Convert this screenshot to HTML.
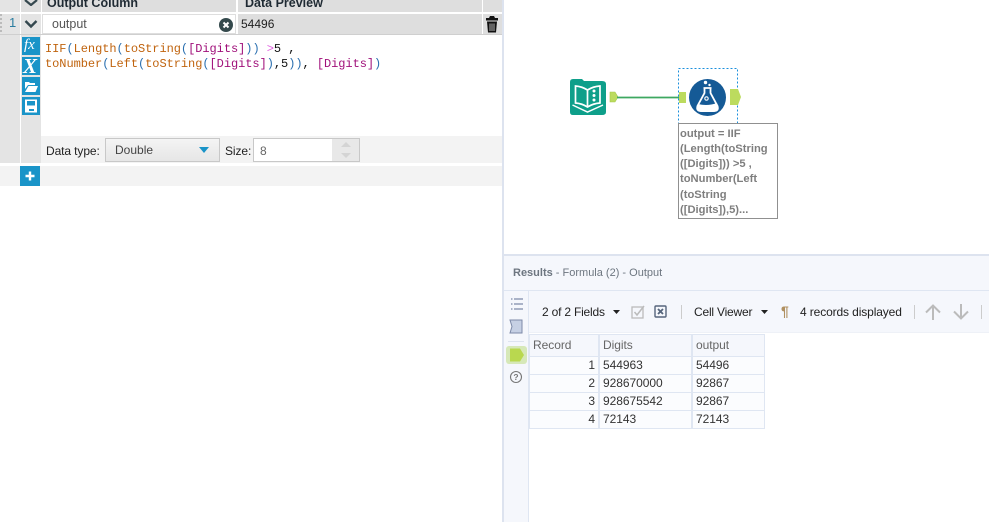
<!DOCTYPE html>
<html><head><meta charset="utf-8">
<style>
html,body{margin:0;padding:0;background:#fff}
body{width:989px;height:522px;overflow:hidden;position:relative;font-family:"Liberation Sans",sans-serif;font-size:12px;color:#222}
.a{position:absolute}
.t{position:absolute;white-space:nowrap;line-height:16px}
.code{position:absolute;left:45px;font-family:"Liberation Mono",monospace;font-size:12px;letter-spacing:-.05px;line-height:15px;white-space:pre;color:#c0640f}
.code i{font-style:normal;color:#2a6fb0}
.code b{font-weight:normal;color:#a0107a}
.code u{text-decoration:none;color:#111}
.cell{position:absolute;background:#fbfcfe;font-size:12px;line-height:17px;padding:0 3px 0 4px;box-sizing:border-box;color:#333;white-space:nowrap;letter-spacing:-.05px}
.hd{background:#f5f7fc;color:#666;line-height:21px}
.r{text-align:right}
.c1{left:530px;width:68px}.c2{left:600px;width:91px}.c3{left:693px;width:71px}
</style></head><body>
<!-- left header -->
<div class="a" style="left:0;top:0;width:20px;height:12px;background:#e4e4e4"></div>
<div class="a" style="left:21px;top:0;width:20px;height:12px;background:#dedede"></div>
<div class="a" style="left:42px;top:0;width:194px;height:12px;background:#dedede"></div>
<div class="a" style="left:238px;top:0;width:244px;height:12px;background:#dedede"></div>
<div class="a" style="left:483px;top:0;width:19px;height:12px;background:#dedede"></div>
<div class="t" style="left:47px;top:-5px;font-weight:bold;color:#1f2a33;font-size:12.5px">Output Column</div>
<div class="t" style="left:245px;top:-5px;font-weight:bold;color:#1f2a33;font-size:12.5px">Data Preview</div>
<svg class="a" style="left:24px;top:0" width="14" height="6"><path d="M1 0 L7 5 L13 0" fill="none" stroke="#35484f" stroke-width="2.2"/></svg>
<!-- row 1 -->
<div class="a" style="left:0;top:14px;width:20px;height:20px;background:#e4e4e4"></div>
<div class="a" style="left:0;top:14px;width:2px;height:20px;background:repeating-linear-gradient(#bbb 0 2px,#e4e4e4 2px 4px)"></div>
<div class="t" style="left:9px;top:15px;color:#2b7da0;font-size:13px">1</div>
<div class="a" style="left:21px;top:14px;width:20px;height:20px;background:#e4e4e4"></div>
<svg class="a" style="left:24px;top:20px" width="14" height="9"><path d="M1.5 1 L7 6.5 L12.5 1" fill="none" stroke="#35484f" stroke-width="2.4"/></svg>
<div class="a" style="left:42px;top:14px;width:194px;height:20px;background:#fff;border:1px solid #dedede;box-sizing:border-box"></div>
<div class="t" style="left:52px;top:16px;color:#555;font-size:12.5px">output</div>
<svg class="a" style="left:219px;top:18px" width="14" height="14"><circle cx="7" cy="7" r="7" fill="#34494c"/><path d="M4.5 4.5 L9.5 9.5 M9.5 4.5 L4.5 9.5" stroke="#fff" stroke-width="2"/></svg>
<div class="a" style="left:238px;top:14px;width:244px;height:20px;background:#dedede"></div>
<div class="a" style="left:483px;top:14px;width:19px;height:20px;background:#dedede"></div>
<div class="a" style="left:0;top:34px;width:502px;height:1px;background:#cfcfcf"></div>
<div class="t" style="left:241px;top:16px;color:#222;font-size:12px">54496</div>
<svg class="a" style="left:485px;top:15px" width="14" height="18" viewBox="0 0 14 18"><path d="M5 1 H9 L10 3 H13 V5.500 H1 V3 H4 Z" fill="#111"/><path d="M2 6.500 H12 L11 17.500 H3 Z" fill="#111"/><path d="M5 8.500 V16 M7 8.500 V16 M9 8.500 V16" stroke="#ddd" stroke-width=".8"/></svg>
<!-- formula area -->
<div class="a" style="left:0;top:35px;width:20px;height:128px;background:#e4e4e4"></div>
<div class="a" style="left:21px;top:35px;width:20px;height:128px;background:#e4e4e4"></div>
<div class="a" style="left:22px;top:37px;width:18px;height:18px;background:#1a94c8"></div>
<div class="t" style="left:24px;top:37px;font-family:'Liberation Serif',serif;font-style:italic;color:#fff;font-size:15px">fx</div>
<div class="a" style="left:22px;top:57px;width:18px;height:18px;background:#1a94c8"></div>
<div class="t" style="left:23px;top:58px;font-family:'Liberation Serif',serif;font-style:italic;font-weight:bold;color:#fff;font-size:21px">X</div>
<div class="a" style="left:22px;top:77px;width:18px;height:18px;background:#1a94c8"></div>
<svg class="a" style="left:22px;top:77px" width="18" height="18"><path d="M3 5 H7 L8 6 H13 V8 H6 L3 12 Z" fill="#fff"/><path d="M6.5 9 H16 L13.5 15 H3 Z" fill="#fff"/></svg>
<div class="a" style="left:22px;top:97px;width:18px;height:18px;background:#1a94c8"></div>
<svg class="a" style="left:22px;top:97px" width="18" height="18"><path d="M3 2.5 H15 V15.5 H3 Z" fill="#fff"/><path d="M5 4 H13 V8.5 H5 Z" fill="#1a94c8"/><path d="M7 12 H12 V14 H7 Z" fill="#1a94c8"/></svg>
<div class="code" style="top:42px">IIF<i>(</i>Length<i>(</i>toString<i>(</i><b>[Digits]</b><i>))</i> <span style="color:#e060e0">&gt;</span><u>5 ,</u></div>
<div class="code" style="top:57px">toNumber<i>(</i>Left<i>(</i>toString<i>(</i><b>[Digits]</b><i>)</i><u>,5</u><i>))</i><u>,</u> <b>[Digits]</b><i>)</i></div>
<!-- type row -->
<div class="a" style="left:41px;top:136px;width:461px;height:27px;background:#f3f3f3"></div>
<div class="t" style="left:46px;top:143px;color:#222;font-size:12px;letter-spacing:-.1px">Data type:</div>
<div class="a" style="left:105px;top:138px;width:115px;height:24px;background:linear-gradient(#f4f4f4,#e6e6e6);border:1px solid #c8c8c8;box-sizing:border-box"></div>
<div class="t" style="left:115px;top:142px;color:#444;font-size:12px">Double</div>
<svg class="a" style="left:199px;top:147px" width="10" height="6"><path d="M0 0 H10 L5 6 Z" fill="#1a94c8"/></svg>
<div class="t" style="left:225px;top:143px;color:#222;font-size:12px;letter-spacing:-.1px">Size:</div>
<div class="a" style="left:253px;top:138px;width:107px;height:24px;background:#fff;border:1px solid #c8c8c8;box-sizing:border-box"></div>
<div class="a" style="left:332px;top:139px;width:27px;height:22px;background:#e8e8e8"></div>
<svg class="a" style="left:339px;top:141px" width="14" height="18"><path d="M2 6 L7 1 L12 6 Z" fill="#d4d4d4"/><path d="M2 12 L7 17 L12 12 Z" fill="#d4d4d4"/></svg>
<div class="t" style="left:260px;top:143px;color:#666;font-size:12px">8</div>
<!-- add row -->
<div class="a" style="left:0;top:166px;width:502px;height:20px;background:#f3f3f3"></div>
<div class="a" style="left:20px;top:166px;width:20px;height:20px;background:#1a94c8"></div>
<svg class="a" style="left:20px;top:166px" width="20" height="20"><path d="M10 5.5 V14.5 M5.5 10 H14.5" stroke="#fff" stroke-width="2.4"/></svg>
<!-- dividers -->
<div class="a" style="left:502px;top:0;width:2px;height:522px;background:#dde3ef"></div>
<!-- canvas -->
<svg class="a" style="left:504px;top:0" width="485" height="254" viewBox="504 0 485 254">
 <path d="M570 82 Q570 79 573 79 H582 L584 81 H602 Q606 81 606 84 V112 Q606 115 602 115 H573 Q570 115 570 112 Z" fill="#0e9f8a"/>
 <path d="M587.500 90 Q582 86.500 575.500 86 V103 Q582 103.500 587.500 107 Q593 103.500 600 103 V86 Q593 86.500 587.500 90 Z M587.500 90 V107" fill="none" stroke="#fff" stroke-width="1.700"/>
 <path d="M572.500 105 L587.500 112 L603 105" fill="none" stroke="#fff" stroke-width="1.500"/>
 <circle cx="594" cy="91" r="1.500" fill="#fff"/><circle cx="594" cy="95.500" r="1.500" fill="#fff"/><circle cx="594" cy="100" r="1.500" fill="#fff"/>
 <path d="M610 92 H615 L618 97 L615 102 H610 Z" fill="#bcdb5e" stroke="#a4c94a" stroke-width=".6"/>
 <path d="M617 97.500 H680" stroke="#3ea860" stroke-width="1.800"/>
 <rect x="679" y="92" width="7" height="11" fill="#bcdb5e"/>
 <rect x="678.500" y="68.500" width="59" height="55" fill="none" stroke="#1a8fdc" stroke-width="1" stroke-dasharray="2 2"/>
 <circle cx="707.500" cy="97.500" r="18.500" fill="#155a96"/>
 <circle cx="705.500" cy="82.500" r="1.700" fill="#fff"/><circle cx="709.500" cy="85" r="1.200" fill="#fff"/>
 <path d="M703.500 88 H711.500 M704.500 88 V93 L697.500 106 Q696 111 701 111 H714 Q719 111 717.500 106 L710.500 93 V88" fill="none" stroke="#fff" stroke-width="1.800"/>
 <path d="M698 104 Q707.500 106.500 717 103 L718 108 Q717 112 713 112 H702 Q697 112 697 108 Z" fill="#fff"/>
 <circle cx="706.500" cy="98.500" r="1.700" fill="none" stroke="#fff" stroke-width="1.100"/>
 <path d="M730 89 H738 L741 97 L738 105 H730 Z" fill="#bcdb5e"/>
 <rect x="678.500" y="123.500" width="99" height="95" fill="#fff" stroke="#909090" stroke-width="1"/>
 <g font-family="'Liberation Sans',sans-serif" font-size="11.200" font-weight="bold" fill="#7e7e7e">
  <text x="680" y="137">output = IIF</text>
  <text x="680" y="152">(Length(toString</text>
  <text x="680" y="167">([Digits])) &gt;5 ,</text>
  <text x="680" y="182">toNumber(Left</text>
  <text x="680" y="198">(toString</text>
  <text x="680" y="213">([Digits]),5)...</text>
 </g>
</svg>
<!-- results -->
<div class="a" style="left:504px;top:254px;width:485px;height:2px;background:#dde3ef"></div>
<div class="a" style="left:504px;top:256px;width:485px;height:35px;background:#f5f7fc"></div>
<div class="a" style="left:504px;top:290px;width:485px;height:1px;background:#dfe6f2"></div>
<div class="t" style="left:513px;top:265px;font-size:11px;color:#6d7680"><b>Results</b> - Formula (2) - Output</div>
<div class="a" style="left:504px;top:291px;width:24px;height:231px;background:#f5f7fc"></div>
<div class="a" style="left:528px;top:291px;width:1px;height:231px;background:#dfe6f2"></div>
<div class="a" style="left:529px;top:291px;width:460px;height:41px;background:#f5f7fc"></div>
<div class="a" style="left:529px;top:332px;width:460px;height:1px;background:#eef1f7"></div>
<svg class="a" style="left:504px;top:291px" width="24" height="100">
 <path d="M7 8 H8.500 M7 13 H8.500 M7 18 H8.500" stroke="#7d8aa8" stroke-width="1.200"/>
 <path d="M10 8 H19 M10 13 H19 M10 18 H19" stroke="#7d8aa8" stroke-width="1.200"/>
 <path d="M6 29 H18 V42 H6 L8 35.500 Z" fill="#c6d0e4" stroke="#7d8aa8" stroke-width="1"/>
 <path d="M4 50.500 H20" stroke="#dde3ef"/>
 <rect x="2" y="55" width="21" height="18" rx="3" fill="#d6e8b8"/>
 <path d="M6 57.500 H16 L20 64 L16 70.500 H6 Z" fill="#b9d84f"/>
 <circle cx="12" cy="86" r="5.500" fill="none" stroke="#777" stroke-width="1.100"/>
 <text x="12" y="89" font-size="8.500" text-anchor="middle" fill="#777" font-family="'Liberation Sans',sans-serif" font-weight="bold">?</text>
</svg>
<!-- toolbar -->
<div class="t" style="left:542px;top:304px;color:#222;font-size:12px;letter-spacing:-.2px">2 of 2 Fields</div>
<svg class="a" style="left:613px;top:310px" width="7" height="4"><path d="M0 0 H7 L3.500 4 Z" fill="#222"/></svg>
<svg class="a" style="left:631px;top:304px" width="14" height="15"><rect x="1" y="3" width="11" height="11" fill="none" stroke="#bbb" stroke-width="1.300"/><path d="M3.500 8 L6 11 L13 2" fill="none" stroke="#bbb" stroke-width="1.500"/></svg>
<svg class="a" style="left:654px;top:305px" width="14" height="14"><rect x="1" y="1" width="11" height="11" rx="1" fill="none" stroke="#56657c" stroke-width="1.400"/><path d="M4 4 L9 9 M9 4 L4 9" stroke="#56657c" stroke-width="1.800"/></svg>
<div class="a" style="left:681px;top:305px;width:1px;height:14px;background:#ccc"></div>
<div class="t" style="left:694px;top:304px;color:#222;font-size:12px;letter-spacing:-.2px">Cell Viewer</div>
<svg class="a" style="left:761px;top:310px" width="7" height="4"><path d="M0 0 H7 L3.500 4 Z" fill="#222"/></svg>
<div class="t" style="left:781px;top:303px;color:#b09060;font-size:14px;font-weight:bold">¶</div>
<div class="t" style="left:800px;top:304px;color:#222;font-size:12px;letter-spacing:-.12px">4 records displayed</div>
<div class="a" style="left:914px;top:305px;width:1px;height:14px;background:#ccc"></div>
<svg class="a" style="left:924px;top:303px" width="48" height="18"><path d="M9 17 V3 M2 9.500 L9 2.500 L16 9.500" fill="none" stroke="#bbb" stroke-width="2"/><path d="M37 1 V15 M30 8.500 L37 15.500 L44 8.500" fill="none" stroke="#bbb" stroke-width="2"/></svg>
<div class="a" style="left:981px;top:305px;width:1px;height:14px;background:#ccc"></div>
<!-- table -->
<div class="a" style="left:529px;top:334px;width:236px;height:95px;background:#dfe6f2"></div>
<div class="cell hd c1" style="top:335px;height:21px;padding-left:3px">Record</div>
<div class="cell hd c2" style="top:335px;height:21px;padding-left:3px">Digits</div>
<div class="cell hd c3" style="top:335px;height:21px;padding-left:3px">output</div>
<div class="cell c1 r" style="top:357px;height:17px">1</div>
<div class="cell c2" style="top:357px;height:17px;padding-left:3px">544963</div>
<div class="cell c3" style="top:357px;height:17px;padding-left:3px">54496</div>
<div class="cell c1 r" style="top:375px;height:17px">2</div>
<div class="cell c2" style="top:375px;height:17px;padding-left:3px">928670000</div>
<div class="cell c3" style="top:375px;height:17px;padding-left:3px">92867</div>
<div class="cell c1 r" style="top:393px;height:17px">3</div>
<div class="cell c2" style="top:393px;height:17px;padding-left:3px">928675542</div>
<div class="cell c3" style="top:393px;height:17px;padding-left:3px">92867</div>
<div class="cell c1 r" style="top:411px;height:17px">4</div>
<div class="cell c2" style="top:411px;height:17px;padding-left:3px">72143</div>
<div class="cell c3" style="top:411px;height:17px;padding-left:3px">72143</div>
</body></html>
